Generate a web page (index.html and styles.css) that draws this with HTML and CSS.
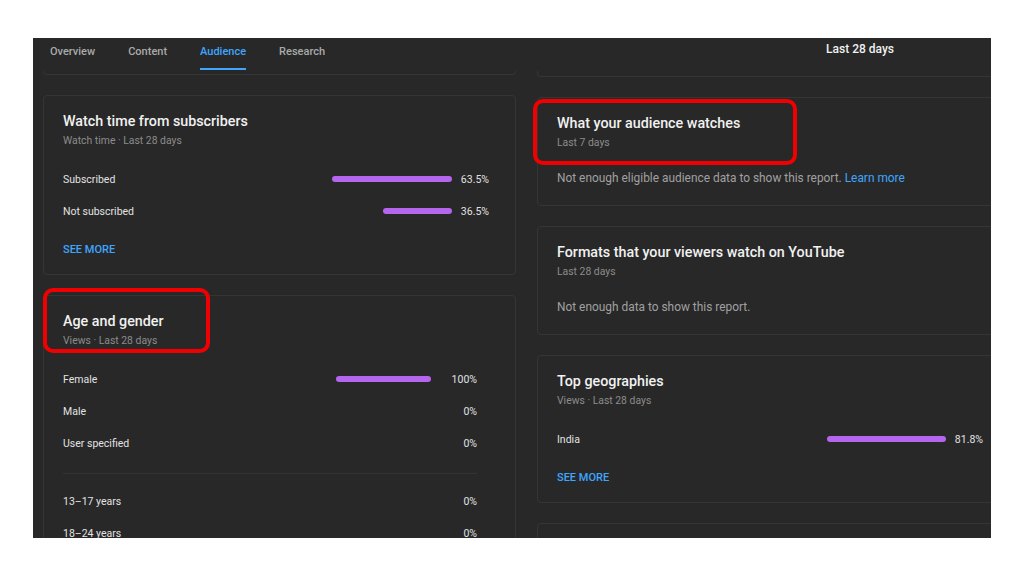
FILE: index.html
```html
<!DOCTYPE html>
<html lang="en">
<head>
  <meta charset="UTF-8">
  <title>Channel analytics - Audience</title>
  <link rel="stylesheet" href="styles.css">
</head>
<body>

  <div class="studio">
    <div class="topbar">
      <div class="tabs">
        <div class="tab">Overview</div>
        <div class="tab">Content</div>
        <div class="tab active">Audience</div>
        <div class="tab">Research</div>
      </div>
      <div class="period">Last 28 days</div>
    </div>

    <div class="columns">
      <div class="column">
        <div class="card stub"></div>

        <div class="card">
          <div class="card-title">Watch time from subscribers</div>
          <div class="card-sub">Watch time · Last 28 days</div>
          <div class="rows">
            <div class="row">
              <span class="label">Subscribed</span>
              <span class="track"><span class="bar" style="width: 120px"></span></span>
              <span class="pct">63.5%</span>
            </div>
            <div class="row">
              <span class="label">Not subscribed</span>
              <span class="track"><span class="bar" style="width: 69px"></span></span>
              <span class="pct">36.5%</span>
            </div>
          </div>
          <div class="see-more">SEE MORE</div>
        </div>

        <div class="card narrow">
          <div class="card-title">Age and gender</div>
          <div class="card-sub">Views · Last 28 days</div>
          <div class="rows">
            <div class="row">
              <span class="label">Female</span>
              <span class="track"><span class="bar" style="width: 95px"></span></span>
              <span class="pct">100%</span>
            </div>
            <div class="row">
              <span class="label">Male</span>
              <span class="track"></span>
              <span class="pct">0%</span>
            </div>
            <div class="row">
              <span class="label">User specified</span>
              <span class="track"></span>
              <span class="pct">0%</span>
            </div>
          </div>
          <div class="divider"></div>
          <div class="rows ages">
            <div class="row">
              <span class="label">13–17 years</span>
              <span class="track"></span>
              <span class="pct">0%</span>
            </div>
            <div class="row">
              <span class="label">18–24 years</span>
              <span class="track"></span>
              <span class="pct">0%</span>
            </div>
          </div>
        </div>
      </div>

      <div class="column">
        <div class="card stub tall"></div>

        <div class="card">
          <div class="card-title">What your audience watches</div>
          <div class="card-sub">Last 7 days</div>
          <div class="message">Not enough eligible audience data to show this report. <span class="link">Learn more</span></div>
        </div>

        <div class="card">
          <div class="card-title">Formats that your viewers watch on YouTube</div>
          <div class="card-sub">Last 28 days</div>
          <div class="message">Not enough data to show this report.</div>
        </div>

        <div class="card">
          <div class="card-title">Top geographies</div>
          <div class="card-sub">Views · Last 28 days</div>
          <div class="rows">
            <div class="row">
              <span class="label">India</span>
              <span class="track"><span class="bar" style="width: 119px"></span></span>
              <span class="pct">81.8%</span>
            </div>
          </div>
          <div class="see-more">SEE MORE</div>
        </div>

        <div class="card empty"></div>
      </div>
    </div>

    <!-- red marks drawn over the screenshot -->
    <div class="mark mark-watches"></div>
    <div class="mark mark-age"></div>
  </div>

</body>
</html>
```

FILE: styles.css
```css
body {
  margin: 0;
  background: #ffffff;
  font-family: Roboto, "Liberation Sans", sans-serif;
}

.studio {
  position: relative;
  margin: 38px 0 0 33px;
  width: 958px;
  height: 500px;
  background: #282828;
  overflow: hidden;
}

.topbar {
  display: flex;
  align-items: flex-start;
  height: 33px;
  padding: 0 97px 0 17px;
}

.tabs {
  display: flex;
  gap: 33px;
}

.tab {
  padding-top: 7px;
  height: 23px;
  font-size: 11px;
  font-weight: 500;
  color: #aaaaaa;
  border-bottom: 2px solid transparent;
}

.tab.active {
  color: #3ea6ff;
  border-bottom-color: #3ea6ff;
}

.period {
  margin-left: auto;
  padding-top: 4px;
  font-size: 12px;
  font-weight: 500;
  color: #f1f1f1;
}

.columns {
  display: flex;
  gap: 21px;
  padding-left: 10px;
}

.column {
  flex: 0 0 473px;
  display: flex;
  flex-direction: column;
  gap: 20px;
}

.card {
  border: 1px solid #353535;
  border-radius: 4px;
  padding: 16px 26px 16px 19px;
}

.card.stub {
  height: 3px;
  padding: 0;
  border-top: none;
  border-radius: 0 0 4px 4px;
}

.card.stub.tall {
  height: 5px;
}

.card.narrow {
  padding-right: 38px;
}

.card.empty {
  height: 60px;
}

.card-title {
  font-size: 14.3px;
  line-height: 18px;
  font-weight: 500;
  color: #f1f1f1;
}

.card-sub {
  margin-top: 4px;
  font-size: 10.4px;
  line-height: 14px;
  color: #8c8c8c;
}

.message {
  margin-top: 20px;
  margin-bottom: 3px;
  font-size: 11.9px;
  line-height: 16px;
  color: #a0a0a0;
}

.link {
  color: #3ea6ff;
}

.rows {
  margin-top: 15px;
}

.row {
  display: flex;
  align-items: center;
  height: 32px;
  font-size: 10.5px;
  color: #e2e2e2;
}

.label {
  flex: 1;
}

.track {
  display: flex;
  justify-content: flex-end;
  width: 190px;
}

.bar {
  height: 6px;
  border-radius: 3px;
  background: #b565ee;
}

.pct {
  width: 37px;
  text-align: right;
}

.narrow .pct {
  width: 46px;
}

.divider {
  margin-top: 14px;
  border-top: 1px solid #333333;
}

.rows.ages {
  margin-top: 11px;
}

.see-more {
  margin-top: 15px;
  font-size: 11px;
  line-height: 16px;
  font-weight: 500;
  color: #3ea6ff;
}

.mark {
  position: absolute;
  border: 4px solid #f00000;
  border-radius: 10px;
  box-sizing: border-box;
}

.mark-watches {
  left: 500px;
  top: 61px;
  width: 264px;
  height: 66px;
}

.mark-age {
  left: 10px;
  top: 250px;
  width: 167px;
  height: 65px;
}
```
